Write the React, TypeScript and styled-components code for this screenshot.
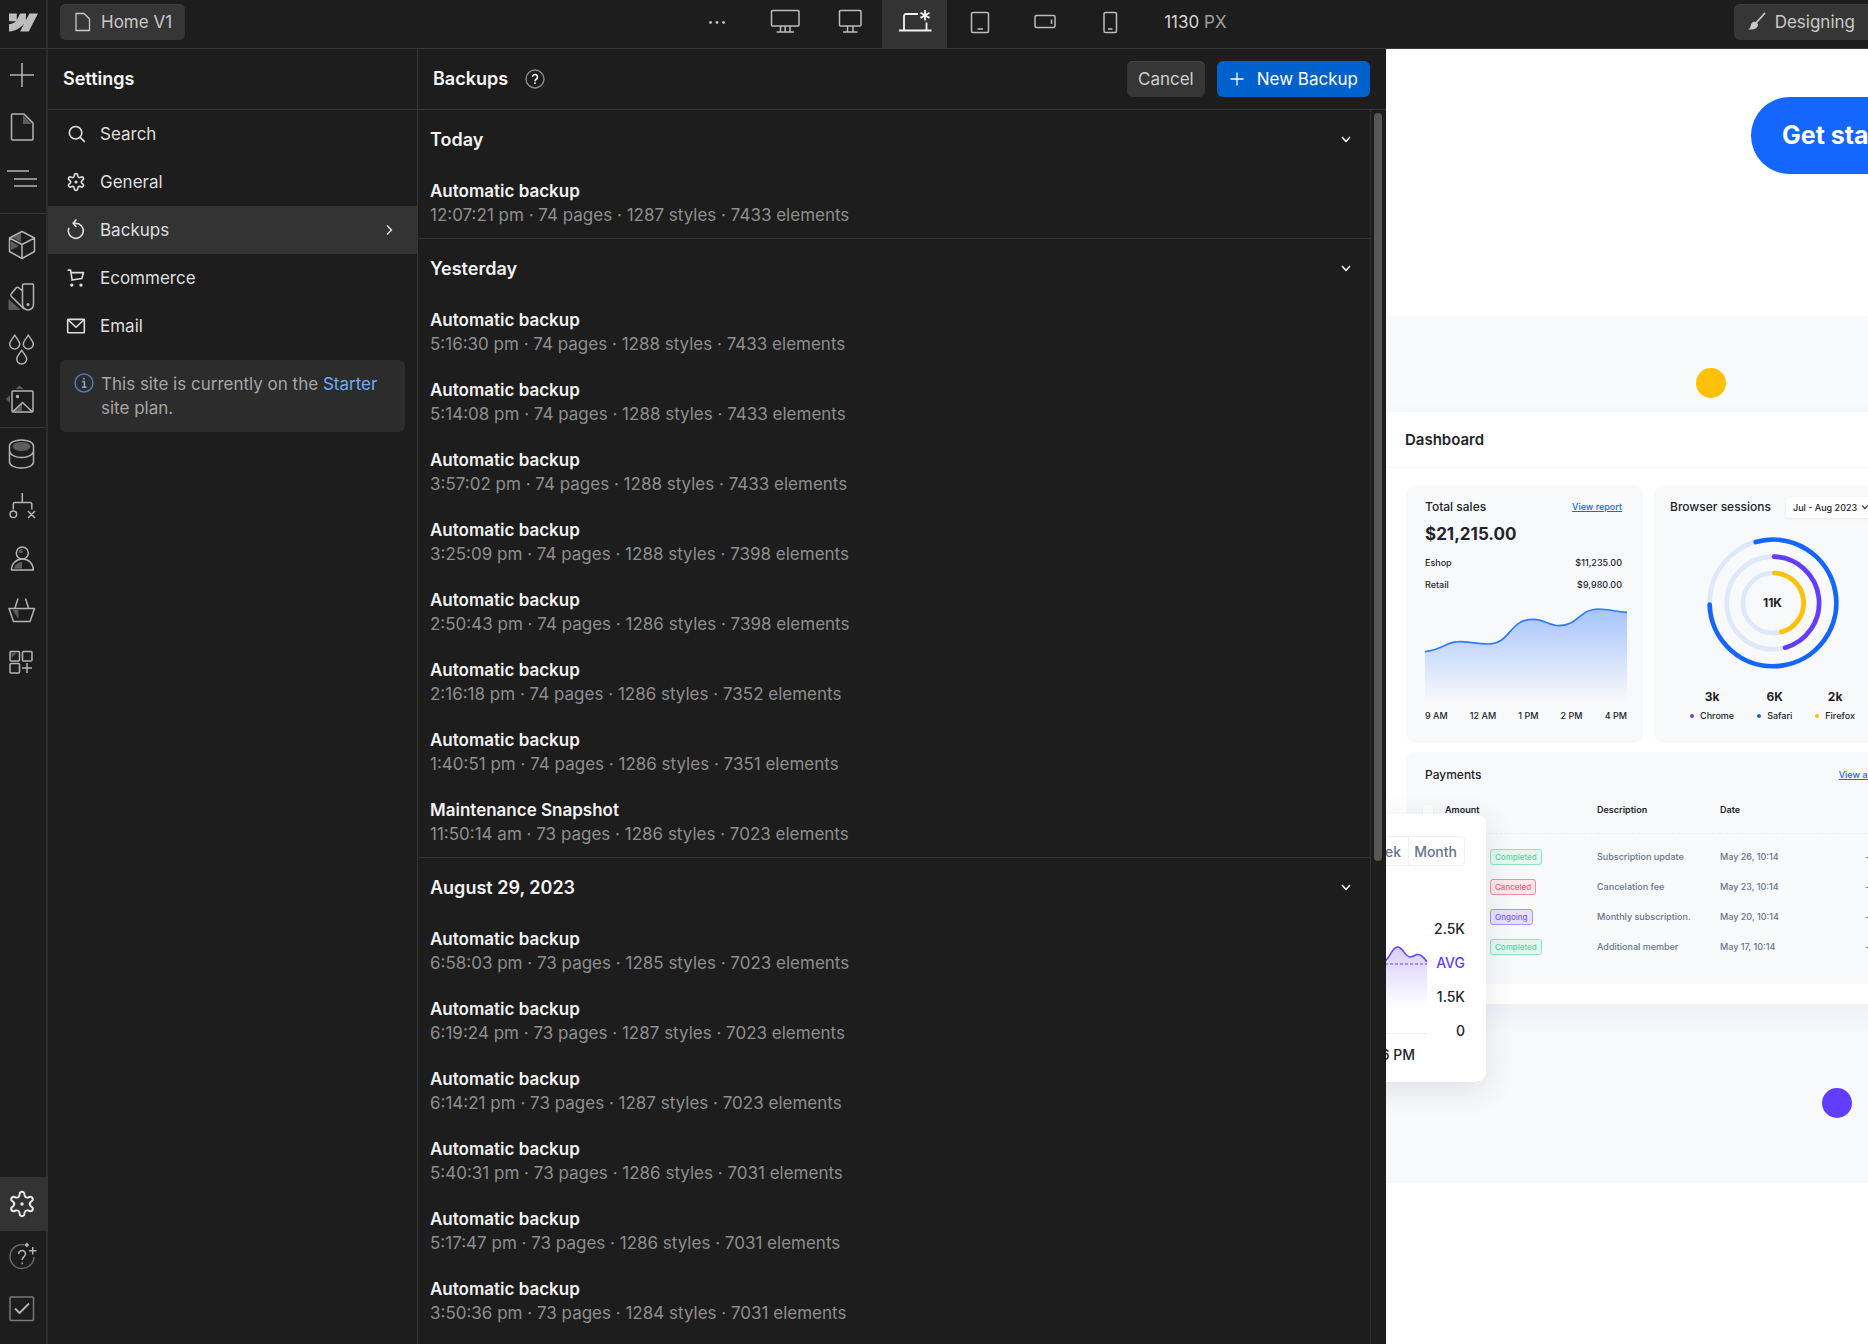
import React from "react";
import styled, { createGlobalStyle } from "styled-components";

const c = {
  bg: "#1d1d1d",
  line: "#363636",
  raised: "#333333",
  text: "#ececec",
  soft: "#c9c9c9",
  dim: "#8e8e8e",
  blue: "#0061cd",
  brand: "#1466ff",
  violet: "#633dff",
  amber: "#ffc107",
  paper: "#f8f9fb",
  ink: "#222429",
  slate: "#66758a",
};

const GlobalStyle = createGlobalStyle`
  *, *::before, *::after { box-sizing: border-box; }
  body { margin: 0; background: ${c.bg}; }
  body, button, input, select {
    font-family: Inter, "Liberation Sans", sans-serif;
  }
  button { margin: 0; padding: 0; border: 0; background: none; color: inherit; cursor: pointer; }
  h1, h2, h3, p, ul, dl, dd { margin: 0; padding: 0; }
  ul { list-style: none; }
`;

/* ---------- shell ---------- */

const Shell = styled.div`
  display: flex;
  flex-direction: column;
  height: 100vh;
  overflow: hidden;
  background: ${c.bg};
  color: ${c.text};
  font-size: 17px;
  line-height: 24px;
`;

const TopBar = styled.header`
  display: flex;
  flex: none;
  align-items: center;
  justify-content: space-between;
  height: 49px;
  border-bottom: 1px solid ${c.line};
`;

const TopStart = styled.div`
  display: flex;
  align-items: center;
  align-self: stretch;
`;

const LogoLink = styled.a`
  display: flex;
  align-items: center;
  align-self: stretch;
  width: 48px;
  margin-right: 12px;
  padding: 0 0 4px 9px;
  border-right: 2px solid #2c2c2c;
  color: #bdbdbd;
`;

const BarButton = styled.button<{ $edge?: boolean }>`
  display: flex;
  align-items: center;
  gap: 8px;
  height: 36px;
  margin-bottom: 4px;
  padding: 0 13px;
  border-radius: ${(p) => (p.$edge ? "6px 0 0 6px" : "6px")};
  background: #363636;
  box-shadow: inset 0 1px 0 #3f3f3f;
  color: ${c.soft};
  font-size: 17px;
`;

const Devices = styled.nav`
  display: flex;
  align-items: center;
  align-self: stretch;
`;

const DeviceButton = styled.button<{ $active?: boolean; $wide?: boolean }>`
  display: flex;
  align-items: center;
  justify-content: center;
  align-self: stretch;
  width: ${(p) => (p.$wide ? 70 : 65)}px;
  padding-bottom: 1px;
  background: ${(p) => (p.$active ? c.raised : "transparent")};
  color: ${(p) => (p.$active ? "#f2f2f2" : "#bcbcbc")};
`;

const Size = styled.p`
  padding: 0 10px 4px 22px;
  color: #d6d6d6;
  span {
    color: #a0a0a0;
  }
`;

const Main = styled.div`
  display: flex;
  flex: 1;
  min-height: 0;
`;

/* ---------- icon rail ---------- */

const Rail = styled.nav`
  display: flex;
  flex: none;
  flex-direction: column;
  width: 48px;
  padding-bottom: 9px;
  border-right: 2px solid #2c2c2c;
`;

const RailGroup = styled.div<{ $before?: number; $after?: number; $last?: boolean }>`
  display: flex;
  flex-direction: column;
  padding-top: ${(p) => p.$before ?? 0}px;
  padding-bottom: ${(p) => p.$after ?? 0}px;
  border-bottom: ${(p) => (p.$last ? "0" : `1px solid ${c.line}`)};
`;

const RailFoot = styled.div`
  display: flex;
  flex-direction: column;
  margin-top: auto;
`;

const RailButton = styled.button<{ $active?: boolean }>`
  display: flex;
  align-items: center;
  justify-content: center;
  height: ${(p) => (p.$active ? 54 : 52)}px;
  margin-right: ${(p) => (p.$active ? -2 : 0)}px;
  padding-right: ${(p) => (p.$active ? 4 : 2)}px;
  background: ${(p) => (p.$active ? c.raised : "transparent")};
  color: ${(p) => (p.$active ? "#ececec" : "#b4b4b4")};
`;

/* ---------- settings panel ---------- */

const PanelHead = styled.div`
  display: flex;
  flex: none;
  align-items: center;
  height: 61px;
  padding: 0 16px 0 15px;
  border-bottom: 1px solid ${c.line};
`;

const PanelTitle = styled.h2`
  font-size: 18px;
  font-weight: 600;
  line-height: 24px;
  color: #f5f5f5;
`;

const Settings = styled.aside`
  flex: none;
  width: 370px;
  border-right: 1px solid ${c.line};
`;

const NavItem = styled.button<{ $active?: boolean }>`
  display: flex;
  align-items: center;
  gap: 14px;
  width: 100%;
  height: 48px;
  padding: 0 22px 0 18px;
  background: ${(p) => (p.$active ? c.raised : "transparent")};
  color: #dedede;
  font-size: 17px;
  text-align: left;
  span {
    flex: 1;
  }
`;

const Notice = styled.div`
  display: flex;
  gap: 7px;
  margin: 10px 12px 0;
  padding: 12px 14px;
  border-radius: 6px;
  background: #2c2c2c;
  color: #a6a6a6;
  svg {
    flex: none;
    margin-top: 1px;
  }
  a {
    color: #6fabf8;
    text-decoration: none;
  }
`;

/* ---------- backups panel ---------- */

const Backups = styled.section`
  display: flex;
  flex: none;
  flex-direction: column;
  width: 968px;
`;

const HelpButton = styled.button`
  display: flex;
  margin-left: 17px;
  color: #b5b5b5;
`;

const Actions = styled.div`
  display: flex;
  gap: 12px;
  margin-left: auto;
`;

const ActionButton = styled.button<{ $primary?: boolean }>`
  display: flex;
  align-items: center;
  gap: 12px;
  height: 36px;
  padding: 0 ${(p) => (p.$primary ? 12 : 11)}px;
  border-radius: 6px;
  background: ${(p) => (p.$primary ? c.blue : "#363636")};
  box-shadow: ${(p) => (p.$primary ? "none" : "inset 0 1px 0 #424242")};
  color: ${(p) => (p.$primary ? "#ffffff" : "#cfcfcf")};
  font-size: 17px;
`;

const ListArea = styled.div`
  display: flex;
  flex: 1;
  min-height: 0;
`;

const List = styled.div`
  flex: 1;
  overflow: hidden;
  border-right: 1px solid #303030;
`;

const Track = styled.div`
  flex: none;
  width: 15px;
  padding: 3px 4px 0 3px;
`;

const Thumb = styled.div`
  height: 748px;
  border-radius: 4px;
  background: #575757;
`;

const Group = styled.section`
  & + & {
    border-top: 1px solid ${c.line};
  }
`;

const GroupHead = styled.button`
  display: flex;
  align-items: center;
  justify-content: space-between;
  width: 100%;
  height: 58px;
  padding: 0 18px 0 12px;
  color: #f2f2f2;
  font-size: 18px;
  font-weight: 600;
`;

const Entry = styled.li`
  height: 70px;
  padding: 11px 12px;
`;

const EntryTitle = styled.h3`
  font-size: 17px;
  font-weight: 600;
  line-height: 24px;
  color: #f2f2f2;
`;

const EntryMeta = styled.p`
  color: ${c.dim};
`;

/* ---------- site canvas ---------- */

const Canvas = styled.main`
  position: relative;
  flex: 1;
  min-width: 0;
  overflow: hidden;
  background: #ffffff;
  color: ${c.ink};
`;

const Hero = styled.div`
  display: flex;
  align-items: flex-start;
  height: 267px;
  padding: 48px 0 0 365px;
`;

const HeroLink = styled.a`
  flex: none;
  padding: 0 31px;
  border-radius: 39px;
  background: ${c.brand};
  color: #ffffff;
  font-size: 25px;
  font-weight: 700;
  line-height: 77px;
  text-decoration: none;
`;

const Stage = styled.div`
  position: relative;
  padding: 96px 0 179px;
  background: ${c.paper};
`;

const Dot = styled.span<{ $x: number; $y: number; $color: string }>`
  position: absolute;
  top: ${(p) => p.$y}px;
  left: ${(p) => p.$x}px;
  width: 30px;
  height: 30px;
  border-radius: 50%;
  background: ${(p) => p.$color};
`;

const Dashboard = styled.div`
  width: 525px;
  background: #ffffff;
  box-shadow: 0 10px 24px rgba(60, 70, 160, 0.06);
`;

const DashHead = styled.h1`
  height: 56px;
  padding-left: 19px;
  border-bottom: 1px solid #f5f6f8;
  font-size: 15px;
  font-weight: 600;
  line-height: 56px;
`;

const DashBody = styled.div`
  display: grid;
  grid-template-columns: 237px 237px;
  gap: 9px 11px;
  padding: 17px 20px 20px;
`;

const cardPadding = {
  sales: "12px 16px 0 19px",
  sessions: "12px 16px 0 16px",
  payments: "13px 19px",
};

const Card = styled.section<{ $kind: keyof typeof cardPadding }>`
  grid-column: ${(p) => (p.$kind === "payments" ? "1 / -1" : "auto")};
  height: ${(p) => (p.$kind === "payments" ? 232 : 258)}px;
  padding: ${(p) => cardPadding[p.$kind]};
  border-radius: 10px;
  background: ${c.paper};
`;

const CardHead = styled.div<{ $inset?: number }>`
  display: flex;
  align-items: center;
  justify-content: space-between;
  height: 20px;
  padding-right: ${(p) => p.$inset ?? 0}px;
`;

const CardTitle = styled.h2`
  font-size: 12px;
  font-weight: 500;
  line-height: 16px;
`;

const TinyLink = styled.a`
  color: ${c.brand};
  font-size: 9px;
  font-weight: 500;
  line-height: 16px;
`;

const Total = styled.p`
  margin: 5px 0 6px;
  font-size: 17px;
  font-weight: 700;
  line-height: 24px;
`;

const Split = styled.dl`
  display: flex;
  justify-content: space-between;
  padding-right: 5px;
  font-size: 9px;
  font-weight: 500;
  line-height: 22px;
`;

const SalesChart = styled.svg`
  display: block;
  width: 100%;
  margin-top: 4px;
`;

const Ticks = styled.div`
  display: flex;
  justify-content: space-between;
  margin-top: 7px;
  font-size: 9px;
  font-weight: 500;
  line-height: 12px;
`;

const Period = styled.select`
  flex: none;
  appearance: none;
  width: 86px;
  height: 21px;
  padding: 0 0 0 7px;
  border: 0;
  border-radius: 3px;
  background: #ffffff;
  box-shadow: 0 1px 3px rgba(30, 40, 70, 0.08);
  color: ${c.ink};
  font-size: 9px;
  font-weight: 500;
`;

const PeriodBox = styled.label`
  display: flex;
  align-items: center;
  svg {
    flex: none;
    margin-left: -11px;
  }
`;

const Donut = styled.div`
  display: grid;
  place-items: center;
  margin: 20px 0;
  font-size: 12px;
  font-weight: 700;
  line-height: 16px;
  > * {
    grid-area: 1 / 1;
  }
`;

const Legend = styled.ul`
  display: flex;
  justify-content: center;
  gap: 23px;
`;

const LegendItem = styled.li<{ $color: string }>`
  text-align: center;
  font-size: 9px;
  font-weight: 500;
  line-height: 12px;
  white-space: nowrap;
  strong {
    display: block;
    margin-bottom: 5px;
    font-size: 12px;
    font-weight: 700;
    line-height: 16px;
  }
  span::before {
    content: "";
    display: inline-block;
    width: 4px;
    height: 4px;
    margin: 0 6px 1px 0;
    border-radius: 50%;
    background: ${(p) => p.$color};
    vertical-align: middle;
  }
`;

const Table = styled.table`
  width: 100%;
  margin-top: 2px;
  border-collapse: collapse;
  table-layout: fixed;
  font-size: 9px;
  line-height: 12px;
  text-align: left;
  white-space: nowrap;
  th {
    height: 46px;
    padding: 0;
    border-bottom: 1px dashed #eff1f5;
    font-weight: 600;
  }
  tbody::before {
    content: "";
    display: block;
    height: 8px;
  }
  td {
    height: 30px;
    padding: 0;
    color: ${c.slate};
    font-weight: 500;
  }
`;

const Col = styled.col<{ $w: number }>`
  width: ${(p) => p.$w}px;
`;

const Tick = styled.input`
  appearance: none;
  display: block;
  width: 10px;
  height: 10px;
  margin: 0 0 0 -2px;
  border-radius: 2px;
  background: #ffffff;
  box-shadow: 0 1px 2px rgba(30, 40, 70, 0.12);
`;

const tones = {
  green: ["#e2f8ef", "#8fe3c0", "#62d3a4"],
  red: ["#fde7ec", "#f88ba0", "#f4607c"],
  violet: ["#e6e1ff", "#a896fb", "#7a5cfa"],
};

const Badge = styled.span<{ $tone: keyof typeof tones }>`
  display: inline-block;
  padding: 0 4px;
  border: 1px solid ${(p) => tones[p.$tone][1]};
  border-radius: 3px;
  background: ${(p) => tones[p.$tone][0]};
  color: ${(p) => tones[p.$tone][2]};
  font-size: 8px;
  font-weight: 500;
  line-height: 14px;
`;

const Float = styled.div`
  position: absolute;
  top: 765px;
  left: -200px;
  width: 300px;
  padding: 22px 21px 21px;
  border-radius: 10px;
  background: #ffffff;
  box-shadow: 0 8px 30px rgba(30, 40, 70, 0.12);
  font-size: 14px;
  font-weight: 500;
`;

const Segments = styled.div`
  display: flex;
  width: max-content;
  margin-left: auto;
  border: 1px solid #eff1f5;
  border-radius: 4px;
`;

const Segment = styled.button`
  height: 28px;
  padding: 0 7px 0 5px;
  color: ${c.slate};
  font-size: 14px;
  font-weight: 500;
  & + & {
    border-left: 1px solid #eff1f5;
  }
`;

const FloatChart = styled.div`
  display: flex;
  margin-top: 46px;
`;

const Scale = styled.ul`
  width: 38px;
  line-height: 34px;
  text-align: right;
`;

const ScaleItem = styled.li<{ $accent?: boolean }>`
  color: ${(p) => (p.$accent ? c.violet : c.ink)};
`;

const FloatTicks = styled.p`
  padding-right: 50px;
  line-height: 12px;
  text-align: right;
`;

/* ---------- icons ---------- */

const Glyph = ({
  size = 32,
  box = 32,
  w = 1.5,
  children,
}: {
  size?: number;
  box?: number;
  w?: number;
  children: React.ReactNode;
}) => (
  <svg
    width={size}
    height={size}
    viewBox={`0 0 ${box} ${box}`}
    fill="none"
    stroke="currentColor"
    strokeWidth={w}
    strokeLinejoin="round"
    overflow="visible"
    aria-hidden="true"
  >
    {children}
  </svg>
);

const shade = { fill: "#5c5c5c", stroke: "none" };

const gearPath = (cx: number, cy: number, r: number) => {
  const at = (deg: number, rad: number) => {
    const a = (deg * Math.PI) / 180;
    return `${(cx + Math.sin(a) * rad).toFixed(2)} ${(cy - Math.cos(a) * rad).toFixed(2)}`;
  };
  let d = "";
  for (let k = 0; k < 6; k++) {
    const a = k * 60;
    d += `${k ? "L" : "M"}${at(a - 17, r * 0.74)}L${at(a - 11, r * 0.94)}Q${at(a, r * 1.1)} ${at(a + 11, r * 0.94)}L${at(a + 17, r * 0.74)}Q${at(a + 30, r * 0.56)} ${at(a + 43, r * 0.74)}`;
  }
  return d + "Z";
};

const drop = (x: number, y: number) =>
  `M${x} ${y - 7}C${x + 2} ${y - 3.5} ${x + 5} ${y - 0.5} ${x + 5} ${y + 2}A5 5 0 0 1 ${x - 5} ${y + 2}C${x - 5} ${y - 0.5} ${x - 2} ${y - 3.5} ${x} ${y - 7}Z`;

const Logo = () => (
  <svg width="29" height="29" viewBox="0 0 24 24" fill="currentColor" aria-hidden="true">
    <path d="m24 4.515-7.658 14.97H9.149l3.205-6.204h-.144C9.566 16.713 5.621 18.973 0 19.485v-6.118s3.596-.213 5.71-2.435H0V4.515h6.417v5.278l.144-.001 2.622-5.277h4.854v5.244h.144l2.72-5.244H24Z" />
  </svg>
);

const railTop = [
  ["Add", <path d="M16 4v24M4 16h24" />],
  [
    "Pages",
    <>
      <path d="M17 4v9h9z" {...shade} />
      <path d="M6.500 3h11.500l9 9v16a1 1 0 0 1-1 1h-19.500a1 1 0 0 1-1-1v-24a1 1 0 0 1 1-1z" />
    </>,
  ],
  ["Navigator", <path d="M1 8h22M8 16h23M8 23h23" />],
] as const;

const railMid = [
  [
    "Components",
    <>
      <path d="M6 8.500 15 4v9zM5 12v9l8-4z" {...shade} />
      <path d="M16 2.500 28.500 9v13.500L16 29.500 3.500 22.500V9zM3.500 9 16 15.500 28.500 9M16 15.500v14" />
    </>,
  ],
  [
    "Styles",
    <>
      <path d="M2.500 18 14.500 29H4a1.500 1.500 0 0 1-1.500-1.500z" {...shade} />
      <path d="M18 3h8.500a1 1 0 0 1 1 1v19.500a5.500 5.500 0 0 1-11 0V4.500a1.500 1.500 0 0 1 1.500-1.500zM16.500 10l-3.500-3a2 2 0 0 0-3 0L5.500 12.500a2 2 0 0 0 0 3L18 28" />
      <circle cx="22" cy="23.500" r="0.800" fill="currentColor" />
    </>,
  ],
  ["Variables", <path d={drop(8.7, 9) + drop(22.3, 9) + drop(15.7, 24)} />],
  [
    "Assets",
    <>
      <path d="M0 14l4-4v8zM9.500 4l4-3.500 4 3.500zM8 26l8-8v8z" {...shade} />
      <rect x="6" y="6" width="21" height="21" rx="1" />
      <path d="M7 26.500 16.500 17.500 26 26.500" />
      <circle cx="11.500" cy="11.500" r="0.900" fill="currentColor" />
    </>,
  ],
] as const;

const railLow = [
  [
    "CMS",
    <>
      <ellipse cx="15.500" cy="8.500" rx="9" ry="4.500" {...shade} />
      <path d="M3.500 8C3.500 4.500 9 2 15.500 2s12 2.500 12 6v16c0 3.500-5.500 6-12 6s-12-2.500-12-6zM3.500 13c0 3.500 5.500 6.500 12 6.500s12-3 12-6.500" />
    </>,
  ],
  [
    "Logic",
    <path d="M16.300 3v9.500M7.300 19.500V14a1.500 1.500 0 0 1 1.500-1.500h15.500a1.500 1.500 0 0 1 1.500 1.500v5.500M22 21l7 7M29 21l-7 7M10.600 24.300a3.300 3.300 0 1 1-6.600 0 3.300 3.300 0 0 1 6.600 0z" />,
  ],
  [
    "Users",
    <>
      <path d="M8 26.500c1-4 4-6 8-6.500v6.500zM12.500 11a4 4 0 0 1 4-4v4z" {...shade} />
      <circle cx="16.300" cy="11" r="6" />
      <path d="M5.500 28c0-6.500 5-11 11-11s10.800 4.500 10.800 11z" />
    </>,
  ],
  [
    "Ecommerce",
    <>
      <path d="M6.500 16h6v9z" {...shade} />
      <path d="M3 14.500h25.500L24 27.500H7.500zM12 4.500 9 14M19.500 4.500l3 9.500" />
    </>,
  ],
  [
    "Apps",
    <>
      <path d="M5.500 7h5l-5 5z" {...shade} />
      <path d="M21 17v10M16 22h10" />
      <rect x="4" y="5.500" width="9.500" height="9.500" rx="1" />
      <rect x="16.500" y="5.500" width="9.500" height="9.500" rx="1" />
      <rect x="4" y="17.500" width="9.500" height="9.500" rx="1" />
    </>,
  ],
] as const;

const deviceIcons = [
  [
    "Extra large desktop",
    <>
      <rect x="2.500" y="2.500" width="27.500" height="15.500" rx="1" />
      <path d="M11.500 18v6M16.200 18v6M21 18v6M7.500 24h17.500" />
    </>,
  ],
  [
    "Large desktop",
    <>
      <rect x="5.500" y="2.500" width="21.500" height="15.500" rx="1" />
      <path d="M13.500 18v6M19 18v6M9 24h14.500" />
    </>,
  ],
  [
    "Base breakpoint",
    <path
      d="M0 22.500h32.500M5 22.500V8a2 2 0 0 1 2-2h12M27.500 14.500v8M26 2v10.500M21.500 4.700l9 5.200M30.500 4.700l-9 5.200"
      strokeWidth="1.800"
    />,
  ],
  [
    "Tablet",
    <>
      <rect x="7.500" y="4.500" width="17" height="20" rx="1.500" />
      <path d="M13.500 21h5.500" />
    </>,
  ],
  [
    "Mobile landscape",
    <>
      <rect x="6" y="7.500" width="20" height="12" rx="1.500" />
      <path d="M22.500 11.500v4.500" />
    </>,
  ],
  [
    "Mobile portrait",
    <>
      <rect x="10" y="4.500" width="12.500" height="20" rx="1.500" />
      <path d="M14 21h4.500" />
    </>,
  ],
] as const;

const navItems = [
  ["Search", <path d="M11.500 3a7.500 7.500 0 1 0 0 15 7.500 7.500 0 0 0 0-15zM16.800 15.800l5.700 5.700" />],
  [
    "General",
    <>
      <path d={gearPath(12, 12, 10)} />
      <circle cx="12" cy="12" r="0.900" fill="currentColor" />
    </>,
  ],
  ["Backups", <path d="M3.500 9.500a9 9 0 1 0 8.500-5.500H9M12.500 -0.500 8.500 4 12.500 8.500" />],
  [
    "Ecommerce",
    <>
      <path d="M2 2.500h3.500l2 13M6 5.500h15l-2 7-12 2" />
      <circle cx="7" cy="20.500" r="1.100" fill="currentColor" />
      <circle cx="18" cy="20.500" r="1.100" fill="currentColor" />
    </>,
  ],
  [
    "Email",
    <>
      <rect x="2" y="4" width="20" height="16" rx="0.500" />
      <path d="M2.500 4.500l9.500 9 9.500-9" />
    </>,
  ],
] as const;

const Chevron = ({ size = 12, w = 1.6 }: { size?: number; w?: number }) => (
  <Glyph size={size} box={12} w={w}>
    <path d="M2 4 6 8.500 10 4" />
  </Glyph>
);

/* ---------- data ---------- */

const groups = [
  { label: "Today", items: [["Automatic backup", "12:07:21 pm", 74, 1287, 7433]] },
  {
    label: "Yesterday",
    items: [
      ["Automatic backup", "5:16:30 pm", 74, 1288, 7433],
      ["Automatic backup", "5:14:08 pm", 74, 1288, 7433],
      ["Automatic backup", "3:57:02 pm", 74, 1288, 7433],
      ["Automatic backup", "3:25:09 pm", 74, 1288, 7398],
      ["Automatic backup", "2:50:43 pm", 74, 1286, 7398],
      ["Automatic backup", "2:16:18 pm", 74, 1286, 7352],
      ["Automatic backup", "1:40:51 pm", 74, 1286, 7351],
      ["Maintenance Snapshot", "11:50:14 am", 73, 1286, 7023],
    ],
  },
  {
    label: "August 29, 2023",
    items: [
      ["Automatic backup", "6:58:03 pm", 73, 1285, 7023],
      ["Automatic backup", "6:19:24 pm", 73, 1287, 7023],
      ["Automatic backup", "6:14:21 pm", 73, 1287, 7023],
      ["Automatic backup", "5:40:31 pm", 73, 1286, 7031],
      ["Automatic backup", "5:17:47 pm", 73, 1286, 7031],
      ["Automatic backup", "3:50:36 pm", 73, 1284, 7031],
    ],
  },
];

const payments: [string, keyof typeof tones, string, string][] = [
  ["Completed", "green", "Subscription update", "May 26, 10:14"],
  ["Canceled", "red", "Cancelation fee", "May 23, 10:14"],
  ["Ongoing", "violet", "Monthly subscription.", "May 20, 10:14"],
  ["Completed", "green", "Additional member", "May 17, 10:14"],
];

/* ---------- sections ---------- */

const RailButtons = ({ items }: { items: readonly (readonly [string, React.ReactNode])[] }) => (
  <>
    {items.map(([label, art]) => (
      <RailButton key={label} aria-label={label}>
        <Glyph>{art}</Glyph>
      </RailButton>
    ))}
  </>
);

const SalesCard = () => (
  <Card $kind="sales">
    <CardHead $inset={5}>
      <CardTitle>Total sales</CardTitle>
      <TinyLink href="#report">View report</TinyLink>
    </CardHead>
    <Total>$21,215.00</Total>
    <Split>
      <dt>Eshop</dt>
      <dd>$11,235.00</dd>
    </Split>
    <Split>
      <dt>Retail</dt>
      <dd>$9,980.00</dd>
    </Split>
    <SalesChart viewBox="0 0 606 309" aria-hidden="true">
      <defs>
        <linearGradient id="sales" x1="0" y1="0" x2="0" y2="1">
          <stop offset="0" stopColor="#1466ff" stopOpacity="0.36" />
          <stop offset="1" stopColor="#1466ff" stopOpacity="0" />
        </linearGradient>
      </defs>
      <path
        d="M0 155C50 150 66 125 100 125C130 124 150 132 190 132C258 132 250 58 325 58C358 58 370 77 403 77C460 77 462 27 520 27C550 27 570 35 606 37V305H0z"
        fill="url(#sales)"
      />
      <path
        d="M0 155C50 150 66 125 100 125C130 124 150 132 190 132C258 132 250 58 325 58C358 58 370 77 403 77C460 77 462 27 520 27C550 27 570 35 606 37"
        fill="none"
        stroke="#2f7bff"
        strokeWidth="5"
      />
    </SalesChart>
    <Ticks>
      {["9 AM", "12 AM", "1 PM", "2 PM", "4 PM"].map((t) => (
        <span key={t}>{t}</span>
      ))}
    </Ticks>
  </Card>
);

const SessionsCard = () => (
  <Card $kind="sessions">
    <CardHead $inset={6}>
      <CardTitle>Browser sessions</CardTitle>
      <PeriodBox>
        <Period aria-label="Period">
          <option>Jul - Aug 2023</option>
        </Period>
        <Chevron size={8} />
      </PeriodBox>
    </CardHead>
    <Donut>
      <svg
        width="132"
        height="132"
        viewBox="-198 -198 396 396"
        fill="none"
        strokeWidth="14"
        strokeLinecap="round"
        aria-hidden="true"
      >
        <g stroke="#dfe8fb">
          <circle r="190" />
          <circle r="139" />
          <circle r="90" />
        </g>
        <path d="M-52-183A190 190 0 1 1-190 5" stroke={c.brand} />
        <path d="M3-139A139 139 0 0 1 36 134" stroke={c.violet} />
        <path d="M4-90A90 90 0 0 1 25 87" stroke={c.amber} />
      </svg>
      <span>11K</span>
    </Donut>
    <Legend>
      <LegendItem $color={c.violet}>
        <strong>3k</strong>
        <span>Chrome</span>
      </LegendItem>
      <LegendItem $color={c.brand}>
        <strong>6K</strong>
        <span>Safari</span>
      </LegendItem>
      <LegendItem $color={c.amber}>
        <strong>2k</strong>
        <span>Firefox</span>
      </LegendItem>
    </Legend>
  </Card>
);

const PaymentsCard = () => (
  <Card $kind="payments">
    <CardHead>
      <CardTitle>Payments</CardTitle>
      <TinyLink href="#payments">View all</TinyLink>
    </CardHead>
    <Table>
      <colgroup>
        {[20, 45, 107, 123, 145, 7].map((w, i) => (
          <Col key={i} $w={w} />
        ))}
      </colgroup>
      <thead>
        <tr>
          <th>
            <Tick type="checkbox" aria-label="Select all payments" />
          </th>
          <th colSpan={2}>Amount</th>
          <th>Description</th>
          <th>Date</th>
          <th />
        </tr>
      </thead>
      <tbody>
        {payments.map(([status, tone, text, date]) => (
          <tr key={date}>
            <td />
            <td />
            <td>
              <Badge $tone={tone}>{status}</Badge>
            </td>
            <td>{text}</td>
            <td>{date}</td>
            <td>-</td>
          </tr>
        ))}
      </tbody>
    </Table>
  </Card>
);

const StatsFloat = () => (
  <Float>
    <Segments>
      <Segment>Week</Segment>
      <Segment>Month</Segment>
    </Segments>
    <FloatChart>
      <svg width="220" height="137" viewBox="0 0 220 137" fill="none" aria-hidden="true">
        <defs>
          <linearGradient id="stats" x1="0" y1="34" x2="0" y2="96" gradientUnits="userSpaceOnUse">
            <stop offset="0" stopColor="#633dff" stopOpacity="0.26" />
            <stop offset="1" stopColor="#633dff" stopOpacity="0" />
          </linearGradient>
        </defs>
        <path
          d="M178 49C183 46 185 35 190.500 35C196 35 198 45 203 45C206 45 208 42.500 211 42.500C215 42.500 217 46 220 50V96H178z"
          fill="url(#stats)"
        />
        <path
          d="M178 49C183 46 185 35 190.500 35C196 35 198 45 203 45C206 45 208 42.500 211 42.500C215 42.500 217 46 220 50"
          stroke={c.violet}
          strokeWidth="1.500"
        />
        <path d="M178 52h42" stroke={c.violet} strokeDasharray="3 2" />
        <path d="M0 121.500h220" stroke="#eff1f5" />
      </svg>
      <Scale>
        <ScaleItem>2.5K</ScaleItem>
        <ScaleItem $accent>AVG</ScaleItem>
        <ScaleItem>1.5K</ScaleItem>
        <ScaleItem>0</ScaleItem>
      </Scale>
    </FloatChart>
    <FloatTicks>6 PM</FloatTicks>
  </Float>
);

export default function App() {
  return (
    <>
      <GlobalStyle />
      <Shell>
        <TopBar>
          <TopStart>
            <LogoLink href="#home" aria-label="Webflow">
              <Logo />
            </LogoLink>
            <BarButton>
              <Glyph size={20} box={20} w={1.3}>
                <path d="M3 1.500h8l5.500 5.500v11.500H3z" />
              </Glyph>
              Home V1
            </BarButton>
          </TopStart>
          <Devices>
            <DeviceButton $wide aria-label="More">
              <Glyph>
                <g fill="currentColor" stroke="none">
                  <circle cx="9.500" cy="14.500" r="1.400" />
                  <circle cx="16" cy="14.500" r="1.400" />
                  <circle cx="22.500" cy="14.500" r="1.400" />
                </g>
              </Glyph>
            </DeviceButton>
            {deviceIcons.map(([label, art], i) => (
              <DeviceButton key={label} aria-label={label} $active={i === 2}>
                <Glyph>{art}</Glyph>
              </DeviceButton>
            ))}
            <Size>
              1130 <span>PX</span>
            </Size>
          </Devices>
          <BarButton $edge>
            <Glyph size={20} box={20}>
              <path d="M18 1 9 11" strokeWidth="1.800" />
              <path d="M8 9.500l3 2.500c0 4-3 6-10 5.500 2.500-1 2.500-3 3-5 .5-2 2.500-3 4-3z" fill="currentColor" stroke="none" />
            </Glyph>
            Designing
          </BarButton>
        </TopBar>
        <Main>
          <Rail>
            <RailGroup $after={8}>
              <RailButtons items={railTop} />
            </RailGroup>
            <RailGroup $before={5}>
              <RailButtons items={railMid} />
            </RailGroup>
            <RailGroup $last>
              <RailButtons items={railLow} />
            </RailGroup>
            <RailFoot>
              <RailButton $active aria-label="Settings">
                <Glyph w={1.9}>
                  <path d={gearPath(16, 16, 12)} />
                  <circle cx="16" cy="16" r="0.800" fill="currentColor" />
                </Glyph>
              </RailButton>
              <RailButton aria-label="Help">
                <Glyph>
                  <path d="M18 3.700a12 12 0 1 0 10 12.300" stroke="#6a6a6a" />
                  <path d="M12.700 13a3.400 3.400 0 1 1 5.600 2.400c-1.500 1.200-2.100 1.700-2.100 3.600M16.200 21.500v1.800M26.700 6v7.500M23 9.700h7.500" />
                  <path d="M20.800 1.500l2.400 2.400-2.400 2.400-2.400-2.400z" fill="currentColor" stroke="none" />
                </Glyph>
              </RailButton>
              <RailButton aria-label="Audit">
                <Glyph>
                  <rect x="4" y="4" width="23.500" height="23.500" rx="1" stroke="#7a7a7a" />
                  <path d="M9 15.500 13.500 20 23 10.500" strokeWidth="1.800" />
                </Glyph>
              </RailButton>
            </RailFoot>
          </Rail>

          <Settings>
            <PanelHead>
              <PanelTitle>Settings</PanelTitle>
            </PanelHead>
            <nav aria-label="Settings">
              {navItems.map(([label, art]) => (
                <NavItem key={label} $active={label === "Backups"}>
                  <Glyph size={20} box={24} w={1.9}>
                    {art}
                  </Glyph>
                  <span>{label}</span>
                  {label === "Backups" && (
                    <Glyph size={12} box={12}>
                      <path d="M4 1.500 8.500 6 4 10.500" />
                    </Glyph>
                  )}
                </NavItem>
              ))}
            </nav>
            <Notice>
              <Glyph size={20} box={20}>
                <circle cx="10" cy="10" r="9" stroke="#4d79ae" />
                <path d="M8.200 8.500h2.200v5.500M8 14.200h4.500M10 4.800v1.800" stroke="#6fabf8" />
              </Glyph>
              <p>
                This site is currently on the <a href="#plans">Starter</a> site plan.
              </p>
            </Notice>
          </Settings>

          <Backups>
            <PanelHead>
              <PanelTitle>Backups</PanelTitle>
              <HelpButton aria-label="About backups">
                <Glyph size={20} box={20} w={1.4}>
                  <circle cx="10" cy="10" r="9" stroke="#8a8a8a" />
                  <path d="M7.500 8a2.500 2.500 0 1 1 4 2c-1 .7-1.500 1.100-1.500 2.200M10 13.300v1.700" stroke="#f0f0f0" strokeWidth="1.600" />
                </Glyph>
              </HelpButton>
              <Actions>
                <ActionButton>Cancel</ActionButton>
                <ActionButton $primary>
                  <Glyph size={16} box={16} w={1.3}>
                    <path d="M8 1.500v13M1.500 8h13" />
                  </Glyph>
                  New Backup
                </ActionButton>
              </Actions>
            </PanelHead>
            <ListArea>
              <List>
                {groups.map((g) => (
                  <Group key={g.label}>
                    <GroupHead aria-expanded="true">
                      {g.label}
                      <Chevron />
                    </GroupHead>
                    <ul>
                      {g.items.map(([title, time, pages, styles, elements]) => (
                        <Entry key={time}>
                          <EntryTitle>{title}</EntryTitle>
                          <EntryMeta>
                            {`${time} · ${pages} pages · ${styles} styles · ${elements} elements`}
                          </EntryMeta>
                        </Entry>
                      ))}
                    </ul>
                  </Group>
                ))}
              </List>
              <Track>
                <Thumb />
              </Track>
            </ListArea>
          </Backups>

          <Canvas>
            <Hero>
              <HeroLink href="#start">Get started</HeroLink>
            </Hero>
            <Stage>
              <Dashboard>
                <DashHead>Dashboard</DashHead>
                <DashBody>
                  <SalesCard />
                  <SessionsCard />
                  <PaymentsCard />
                </DashBody>
              </Dashboard>
              <Dot $x={310} $y={52} $color={c.amber} />
              <Dot $x={436} $y={772} $color={c.violet} />
            </Stage>
            <StatsFloat />
          </Canvas>
        </Main>
      </Shell>
    </>
  );
}
